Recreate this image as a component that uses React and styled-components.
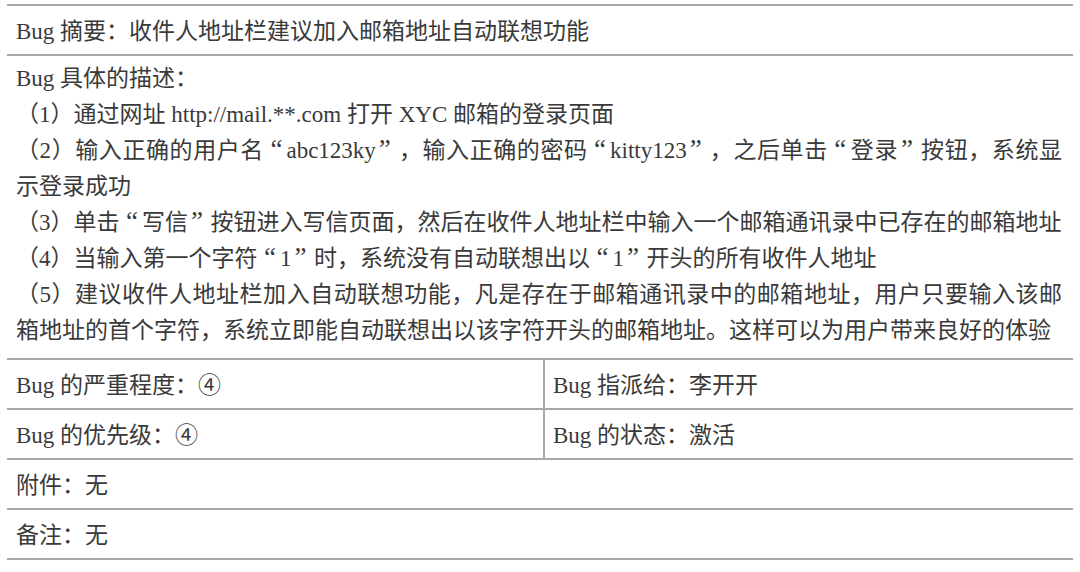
import React from 'react';
import styled, { createGlobalStyle } from 'styled-components';

const GlobalStyle = createGlobalStyle`
  html, body {
    margin: 0;
    padding: 0;
    background: #fff;
  }
`;

const LINE = '#a9a9a9';

export default function App() {
  return (
    <>
      <GlobalStyle />
      <Sheet>
        <Row>
          <Cell>Bug 摘要：收件人地址栏建议加入邮箱地址自动联想功能</Cell>
        </Row>

        <Row>
          <Desc>
            <Para>Bug 具体的描述：</Para>
            <Para>（1）通过网址 http://mail.**.com 打开 XYC 邮箱的登录页面</Para>
            <Para>
              （2）输入正确的用户名<Q open>“</Q>abc123ky<Q>”</Q>，输入正确的密码<Q open>“</Q>kitty123<Q>”</Q>，之后单击<Q open>“</Q>登录<Q>”</Q>按钮，系统显示登录成功
            </Para>
            <Para>
              （3）单击<Q open>“</Q>写信<Q>”</Q>按钮进入写信页面，然后在收件人地址栏中输入一个邮箱通讯录中已存在的邮箱地址
            </Para>
            <Para>
              （4）当输入第一个字符<Q open>“</Q>1<Q>”</Q>时，系统没有自动联想出以<Q open>“</Q>1<Q>”</Q>开头的所有收件人地址
            </Para>
            <Para>
              （5）建议收件人地址栏加入自动联想功能，凡是存在于邮箱通讯录中的邮箱地址，用户只要输入该邮箱地址的首个字符，系统立即能自动联想出以该字符开头的邮箱地址。这样可以为用户带来良好的体验
            </Para>
          </Desc>
        </Row>

        <Row split>
          <Cell divider>Bug 的严重程度：④</Cell>
          <Cell>Bug 指派给：李开开</Cell>
        </Row>

        <Row split>
          <Cell divider>Bug 的优先级：④</Cell>
          <Cell>Bug 的状态：激活</Cell>
        </Row>

        <Row>
          <Cell>附件：无</Cell>
        </Row>

        <Row>
          <Cell>备注：无</Cell>
        </Row>
      </Sheet>
    </>
  );
}

const Sheet = styled.div`
  width: 1066px;
  margin: 4px 0 0 7px;
  border-top: 2px solid ${LINE};
  color: #3a3a3a;
  font-family: "Liberation Serif", "Noto Sans CJK SC", serif;
  font-size: 23px;
  text-spacing-trim: space-all;
`;

const Row = styled.div`
  display: grid;
  grid-template-columns: ${(p) => (p.split ? '538px 1fr' : '1fr')};
  border-bottom: 2px solid ${LINE};
`;

const Cell = styled.div`
  display: flex;
  align-items: center;
  height: 48px;
  padding: 0 9px 2px;
  box-sizing: border-box;
  white-space: nowrap;
  border-right: ${(p) => (p.divider ? `2px solid ${LINE}` : 'none')};
  & + & {
    padding-left: 8px;
  }
`;

const Desc = styled.div`
  padding: 5px 11px 9px 9px;
  line-height: 36px;
`;

const Para = styled.div`
  text-align: justify;
`;

/* Chinese-style quote marks: a near full-width slot, glyph toward the quoted text */
const Q = styled.span.withConfig({ shouldForwardProp: (prop) => prop !== 'open' })`
  display: inline-block;
  width: 22.5px;
  font-size: 27px;
  line-height: 1;
  text-align: ${(p) => (p.open ? 'right' : 'left')};
  padding: ${(p) => (p.open ? '0 4px 0 0' : '0 0 0 3px')};
  box-sizing: border-box;
`;
